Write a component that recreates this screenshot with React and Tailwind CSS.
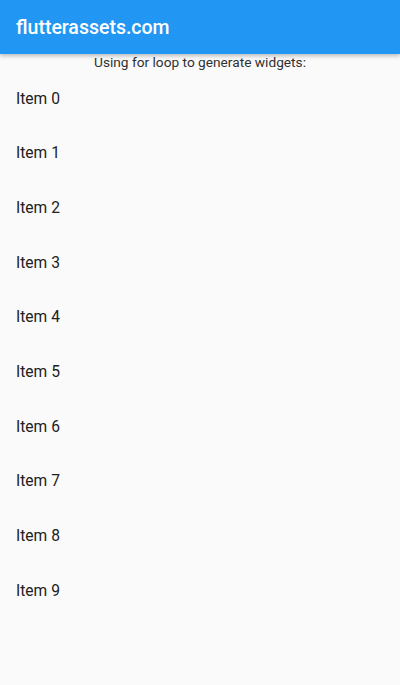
export default function App() {
  const items = Array.from({ length: 10 }, (_, i) => `Item ${i}`);

  return (
    <div className="w-[400px] h-[685px] bg-[#fafafa] overflow-hidden" style={{ fontFamily: "Roboto, 'Noto Sans', sans-serif" }}>
      <header className="relative z-10 h-[54px] bg-[#2196f3] flex items-center px-4 shadow-[0_2px_4px_rgba(0,0,0,0.25)]">
        <h1 className="mt-[2px] text-[19.5px] font-medium text-white leading-none">flutterassets.com</h1>
      </header>

      <p className="text-center text-[13.7px] leading-[16px] text-[#303030]">Using for loop to generate widgets:</p>

      <div className="pt-[2px]">
        {items.map((item) => (
          <div key={item} className="h-[54.7px] flex items-center px-4">
            <span className="text-[15.6px] text-[#212121]">{item}</span>
          </div>
        ))}
      </div>
    </div>
  );
}
